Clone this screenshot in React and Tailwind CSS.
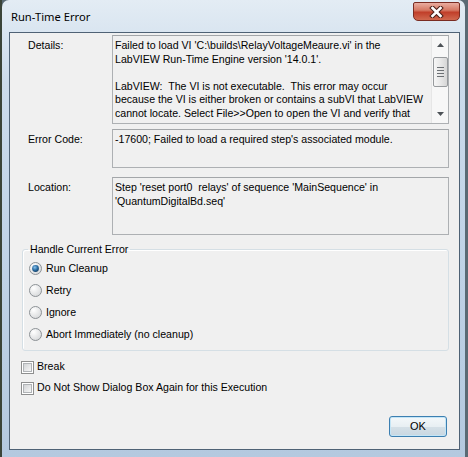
import React from "react";

const Radio = ({ id, checked }) => (
  <svg width="13" height="13" viewBox="0 0 13 13" className="shrink-0">
    <defs>
      <radialGradient id={`rf${id}`} cx="0.35" cy="0.3" r="0.8">
        <stop offset="0" stopColor="#ffffff" />
        <stop offset="1" stopColor="#d4d6d8" />
      </radialGradient>
      <radialGradient id={`rd${id}`} cx="0.4" cy="0.35" r="0.7">
        <stop offset="0" stopColor="#8cc3ec" />
        <stop offset="0.55" stopColor="#2b6ea5" />
        <stop offset="1" stopColor="#123e63" />
      </radialGradient>
    </defs>
    <circle cx="6.5" cy="6.5" r="6" fill={`url(#rf${id})`} stroke="#8d9296" />
    {checked && <circle cx="6.5" cy="6.5" r="3.4" fill={`url(#rd${id})`} />}
  </svg>
);

const Check = () => (
  <span className="w-[13px] h-[13px] shrink-0 border border-[#8e8f8f] bg-white p-[1px]">
    <span className="block w-full h-full bg-gradient-to-br from-[#d2d4d6] to-[#f6f6f6] border border-[#b0b3b6]" />
  </span>
);

const Field = ({ label, height, className, children, scroll }) => (
  <div className={`flex ${className}`}>
    <div className="w-[102px] pl-[18px] pt-[4px] leading-[13.6px]">{label}</div>
    <div
      className="w-[337px] border border-[#adb0b3] border-t-[#a3a6a9] flex"
      style={{ height }}
    >
      <div className="flex-1 pt-[3px] pl-[2px] leading-[13.6px] whitespace-pre overflow-hidden">
        {children}
      </div>
      {scroll && (
        <div className="w-[17px] h-full bg-[#f7f7f7] border-l border-[#e6e6e6] flex flex-col items-center">
          <div className="h-[18px] flex items-center justify-center">
            <svg width="7" height="4" viewBox="0 0 7 4">
              <path d="M0 4 L3.5 0 L7 4 Z" fill="#4d5257" />
            </svg>
          </div>
          <div className="mt-[3px] w-[15px] h-[30px] rounded-[2px] border border-[#979a9d] bg-gradient-to-r from-[#f6f6f6] via-[#e8e8e8] to-[#d6d6d6] flex flex-col items-center justify-center gap-[2px]">
            <span className="block w-[7px] h-[1px] bg-[#6c7074]" />
            <span className="block w-[7px] h-[1px] bg-[#6c7074]" />
            <span className="block w-[7px] h-[1px] bg-[#6c7074]" />
            <span className="block w-[7px] h-[1px] bg-[#6c7074]" />
          </div>
          <div className="flex-1" />
          <div className="h-[18px] flex items-center justify-center">
            <svg width="7" height="4" viewBox="0 0 7 4">
              <path d="M0 0 L3.5 4 L7 0 Z" fill="#4d5257" />
            </svg>
          </div>
        </div>
      )}
    </div>
  </div>
);

export default function App() {
  return (
    <div className="w-[468px] h-[457px] bg-[#5a6a74] flex overflow-hidden font-['Liberation_Sans',Arial,sans-serif] text-[10.6px] text-black">
      <div className="w-[2px] h-full bg-[#3b4438]" />
      <div className="w-[463px] h-[457px] rounded-t-[7px] pl-[7px] pr-[5px] flex flex-col bg-[linear-gradient(180deg,#e3ecf4_0%,#cbdbeb_18%,#bfd2e6_60%,#b4c9df_100%)]">
        <div className="h-[32px] flex items-start justify-between">
          <div className="ml-[2px] pt-[9px] text-[11.2px] leading-[16px] font-['Noto_Sans',sans-serif]">
            Run-Time Error
          </div>
          <div className="mt-[2px] w-[47px] h-[19px] rounded-b-[5px] rounded-t-[2px] border border-[#7a2c22] bg-[linear-gradient(180deg,#e9ada0_0%,#d57964_42%,#c13f2a_55%,#d0694f_100%)] flex items-center justify-center">
            <svg width="15" height="12" viewBox="0 0 15 12">
              <path d="M3.5 2 L11.5 10 M11.5 2 L3.5 10" stroke="#4a2019" strokeWidth="4.6" strokeLinecap="square" />
              <path d="M3.5 2 L11.5 10 M11.5 2 L3.5 10" stroke="#ffffff" strokeWidth="2.6" strokeLinecap="square" />
            </svg>
          </div>
        </div>

        <div className="h-[418px] border border-[#4f6275] bg-[#f0f0f0] flex flex-col">
          <Field label="Details:" height={89} className="mt-[2px]" scroll>
            {"Failed to load VI 'C:\\builds\\RelayVoltageMeaure.vi' in the\nLabVIEW Run-Time Engine version '14.0.1'.\n\nLabVIEW:  The VI is not executable.  This error may occur\nbecause the VI is either broken or contains a subVI that LabVIEW\ncannot locate. Select File>>Open to open the VI and verify that"}
          </Field>
          <Field label="Error Code:" height={39} className="mt-[5px]">
            {"-17600; Failed to load a required step's associated module."}
          </Field>
          <Field label="Location:" height={58} className="mt-[9px]">
            {"Step 'reset port0  relays' of sequence 'MainSequence' in\n'QuantumDigitalBd.seq'"}
          </Field>

          <fieldset className="ml-[12px] mt-[8px] w-[427px] border border-[#d5dfe5] rounded-[3px] pb-[4px] shadow-[inset_1px_1px_0_#ffffff]">
            <legend className="ml-[5px] px-[2px] leading-[13.6px]">Handle Current Error</legend>
            <div className="mt-[1px] flex flex-col">
              {[
                ["Run Cleanup", true],
                ["Retry", false],
                ["Ignore", false],
                ["Abort Immediately (no cleanup)", false],
              ].map(([t, c], i) => (
                <div key={t} className="h-[22px] flex items-center ml-[6px] gap-[4px]">
                  <Radio id={i} checked={c} />
                  <span>{t}</span>
                </div>
              ))}
            </div>
          </fieldset>

          <div className="mt-[6px] ml-[11px] flex flex-col">
            <div className="h-[21px] flex items-center gap-[3px]">
              <Check />
              <span>Break</span>
            </div>
            <div className="h-[21px] flex items-center gap-[3px]">
              <Check />
              <span>Do Not Show Dialog Box Again for this Execution</span>
            </div>
          </div>

          <div className="mt-[17px] mr-[12px] flex justify-end">
            <button className="w-[58px] h-[21px] rounded-[3px] border border-[#3c7fb1] bg-[linear-gradient(180deg,#f4f8fa_0%,#e8eff3_50%,#d5e0e7_51%,#c9d7e1_100%)] shadow-[inset_0_0_0_1px_#c4e5f6] text-[11px]">
              OK
            </button>
          </div>
        </div>
      </div>
    </div>
  );
}
